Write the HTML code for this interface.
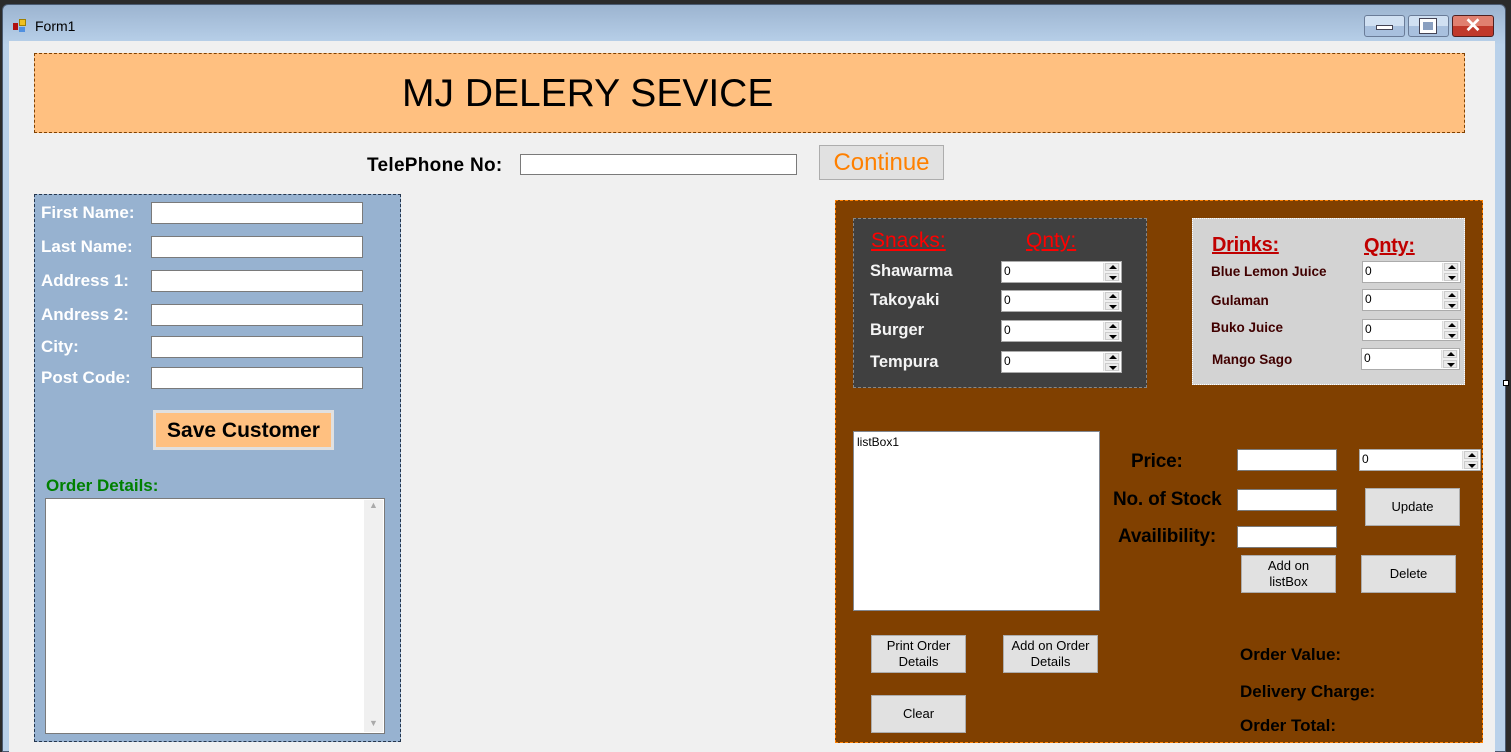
<!DOCTYPE html>
<html><head><meta charset="utf-8"><style>
*{margin:0;padding:0;box-sizing:border-box}
body{width:1511px;height:752px;overflow:hidden;background:#2b2b2b;font-family:"Liberation Sans",Arial,sans-serif;position:relative}
.a{position:absolute}
.t{position:absolute;white-space:nowrap}
.in{position:absolute;background:#fff;border:1px solid #7a7a7a}
.btn{position:absolute;background:#e1e1e1;border:1px solid #adadad;font-size:13px;color:#000;text-align:center;display:flex;align-items:center;justify-content:center;line-height:16px}
.sp{position:absolute;background:#fff;border:1px solid #ababab;font-size:12px;padding-left:2px;line-height:19px}
.sp .b{position:absolute;right:1px;top:1px;bottom:1px;width:17px;background:#f0f0f0;border-left:1px solid #ddd}
.sp .b i{position:absolute;left:1px;width:14px;height:8px;border:1px solid #ccc;background:#eaeaea}
.sp .b i:after{content:"";position:absolute;left:3px;border-left:4px solid transparent;border-right:4px solid transparent}
.sp .b i.u{top:0}.sp .b i.u:after{top:1px;border-bottom:4px solid #000}
.sp .b i.d{bottom:0}.sp .b i.d:after{top:2px;border-top:4px solid #000}
.wl{color:#fff;font-weight:bold;font-size:17px}
.nl{color:#f4f4f4;font-weight:bold;font-size:16.5px}
.dl{color:#400000;font-weight:bold;font-size:13.5px}
.bl{color:#000;font-weight:bold;font-size:19px;letter-spacing:-.2px}
.ol{color:#000;font-weight:bold;font-size:17px}
</style></head><body>
<div class="a" style="left:2px;top:4px;width:1504px;height:748px;background:linear-gradient(#9cb4d0,#b9d1ea 40px,#b9d1ea);border-radius:6px 6px 0 0;border:1px solid #4a5a70"></div>
<div class="a" style="left:12px;top:18px;width:16px;height:16px">
<div class="a" style="left:1px;top:5px;width:5px;height:7px;background:#b01010"></div>
<div class="a" style="left:7px;top:1px;width:7px;height:7px;background:#f0c020;border:1px solid #a08000"></div>
<div class="a" style="left:7px;top:9px;width:6px;height:5px;background:#5090e0"></div></div>
<div class="t" style="left:35px;top:18px;font-size:14px;color:#000">Form1</div>
<div class="a" style="left:1364px;top:15px;width:41px;height:22px;border:1px solid #6a7c98;border-radius:3px;background:linear-gradient(#d0e0f2 50%,#a8c0de 50%)"><div class="a" style="left:11px;top:9px;width:17px;height:5px;background:#fff;border:1px solid #445"></div></div>
<div class="a" style="left:1408px;top:15px;width:41px;height:22px;border:1px solid #6a7c98;border-radius:3px;background:linear-gradient(#d0e0f2 50%,#a8c0de 50%)"><div class="a" style="left:11px;top:3px;width:16px;height:14px;border:3px solid #fff;outline:1px solid #445;background:#8aa0c0"></div></div>
<div class="a" style="left:1452px;top:15px;width:42px;height:22px;border:1px solid #502020;border-radius:3px;background:linear-gradient(#e08070 50%,#c0392b 50%);color:#fff;font-weight:bold;font-size:20px;text-align:center;line-height:20px">✕</div>
<div class="a" style="left:9px;top:41px;width:1486px;height:711px;background:#f0f0f0"></div>
<div class="a" style="left:1503px;top:380px;width:6px;height:6px;background:#fff;border:1px solid #000"></div>
<div class="a" style="left:34px;top:53px;width:1431px;height:80px;background:#ffc080;border:1px dashed #804000"></div>
<div class="t" style="left:402px;top:72px;font-size:39px;color:#000">MJ DELERY SEVICE</div>
<div class="t" style="left:367px;top:155px;font-size:19px;font-weight:bold;letter-spacing:.3px">TelePhone No:</div>
<div class="in" style="left:520px;top:154px;width:277px;height:21px"></div>
<div class="btn" style="left:819px;top:145px;width:125px;height:35px;color:#ff8000;font-size:24px">Continue</div>
<div class="a" style="left:34px;top:194px;width:367px;height:548px;background:#97b2d0;border:1px dashed #24364e"></div>
<div class="t wl" style="left:41px;top:203px">First Name:</div>
<div class="t wl" style="left:41px;top:237px">Last Name:</div>
<div class="t wl" style="left:41px;top:271px">Address 1:</div>
<div class="t wl" style="left:41px;top:305px">Andress 2:</div>
<div class="t wl" style="left:41px;top:337px">City:</div>
<div class="t wl" style="left:41px;top:368px">Post Code:</div>
<div class="in" style="left:151px;top:202px;width:212px;height:22px"></div>
<div class="in" style="left:151px;top:236px;width:212px;height:22px"></div>
<div class="in" style="left:151px;top:270px;width:212px;height:22px"></div>
<div class="in" style="left:151px;top:304px;width:212px;height:22px"></div>
<div class="in" style="left:151px;top:336px;width:212px;height:22px"></div>
<div class="in" style="left:151px;top:367px;width:212px;height:22px"></div>
<div class="btn" style="left:153px;top:410px;width:181px;height:40px;background:#ffc080;border:3px solid #e0e0e0;font-size:21px;font-weight:bold;padding-top:2px">Save Customer</div>
<div class="t" style="left:46px;top:476px;color:#008000;font-weight:bold;font-size:17px">Order Details:</div>
<div class="in" style="left:45px;top:498px;width:340px;height:236px"><div class="a" style="right:1px;top:1px;width:19px;bottom:1px;background:#f0f0f0;color:#aaa;font-size:9px;text-align:center">▲<div class="a" style="bottom:4px;left:0;width:19px">▼</div></div></div>
<div class="a" style="left:835px;top:200px;width:648px;height:543px;background:#804000;border:1px dashed #ff8000"></div>
<div class="a" style="left:853px;top:218px;width:294px;height:170px;background:#404040;border:1px dashed #888"></div>
<div class="t" style="left:871px;top:229px;color:#f00;font-size:21px;text-decoration:underline">Snacks:</div>
<div class="t" style="left:1026px;top:229px;color:#f00;font-size:21px;text-decoration:underline">Qnty:</div>
<div class="t nl" style="left:870px;top:262px">Shawarma</div>
<div class="t nl" style="left:870px;top:291px">Takoyaki</div>
<div class="t nl" style="left:870px;top:321px">Burger</div>
<div class="t nl" style="left:870px;top:353px">Tempura</div>
<div class="sp" style="left:1001px;top:261px;width:121px;height:22px">0<div class="b"><i class="u"></i><i class="d"></i></div></div>
<div class="sp" style="left:1001px;top:290px;width:121px;height:22px">0<div class="b"><i class="u"></i><i class="d"></i></div></div>
<div class="sp" style="left:1001px;top:320px;width:121px;height:22px">0<div class="b"><i class="u"></i><i class="d"></i></div></div>
<div class="sp" style="left:1001px;top:351px;width:121px;height:22px">0<div class="b"><i class="u"></i><i class="d"></i></div></div>
<div class="a" style="left:1192px;top:218px;width:273px;height:167px;background:#d3d3d3;border:1px dotted #fff"></div>
<div class="t" style="left:1212px;top:234px;color:#c00000;font-size:20px;font-weight:bold;text-decoration:underline;letter-spacing:-.3px">Drinks:</div>
<div class="t" style="left:1364px;top:235px;color:#c00000;font-size:20px;font-weight:bold;text-decoration:underline;letter-spacing:-.3px">Qnty:</div>
<div class="t dl" style="left:1211px;top:264px">Blue Lemon Juice</div>
<div class="t dl" style="left:1211px;top:293px">Gulaman</div>
<div class="t dl" style="left:1211px;top:320px">Buko Juice</div>
<div class="t dl" style="left:1212px;top:352px">Mango Sago</div>
<div class="sp" style="left:1362px;top:261px;width:99px;height:22px">0<div class="b"><i class="u"></i><i class="d"></i></div></div>
<div class="sp" style="left:1362px;top:289px;width:99px;height:22px">0<div class="b"><i class="u"></i><i class="d"></i></div></div>
<div class="sp" style="left:1362px;top:319px;width:99px;height:22px">0<div class="b"><i class="u"></i><i class="d"></i></div></div>
<div class="sp" style="left:1361px;top:348px;width:99px;height:22px">0<div class="b"><i class="u"></i><i class="d"></i></div></div>
<div class="in" style="left:853px;top:431px;width:247px;height:180px;border-color:#828790;font-size:12px;padding:3px">listBox1</div>
<div class="t bl" style="left:1131px;top:451px">Price:</div>
<div class="t bl" style="left:1113px;top:489px">No. of Stock</div>
<div class="t bl" style="left:1118px;top:526px">Availibility:</div>
<div class="in" style="left:1237px;top:449px;width:100px;height:22px"></div>
<div class="in" style="left:1237px;top:489px;width:100px;height:22px"></div>
<div class="in" style="left:1237px;top:526px;width:100px;height:22px"></div>
<div class="sp" style="left:1359px;top:449px;width:122px;height:22px">0<div class="b"><i class="u"></i><i class="d"></i></div></div>
<div class="btn" style="left:1365px;top:488px;width:95px;height:38px">Update</div>
<div class="btn" style="left:1241px;top:555px;width:95px;height:38px">Add on<br>listBox</div>
<div class="btn" style="left:1361px;top:555px;width:95px;height:38px">Delete</div>
<div class="btn" style="left:871px;top:635px;width:95px;height:38px">Print Order<br>Details</div>
<div class="btn" style="left:1003px;top:635px;width:95px;height:38px">Add on Order<br>Details</div>
<div class="btn" style="left:871px;top:695px;width:95px;height:38px">Clear</div>
<div class="t ol" style="left:1240px;top:645px">Order Value:</div>
<div class="t ol" style="left:1240px;top:682px">Delivery Charge:</div>
<div class="t ol" style="left:1240px;top:716px">Order Total:</div>
</body></html>
